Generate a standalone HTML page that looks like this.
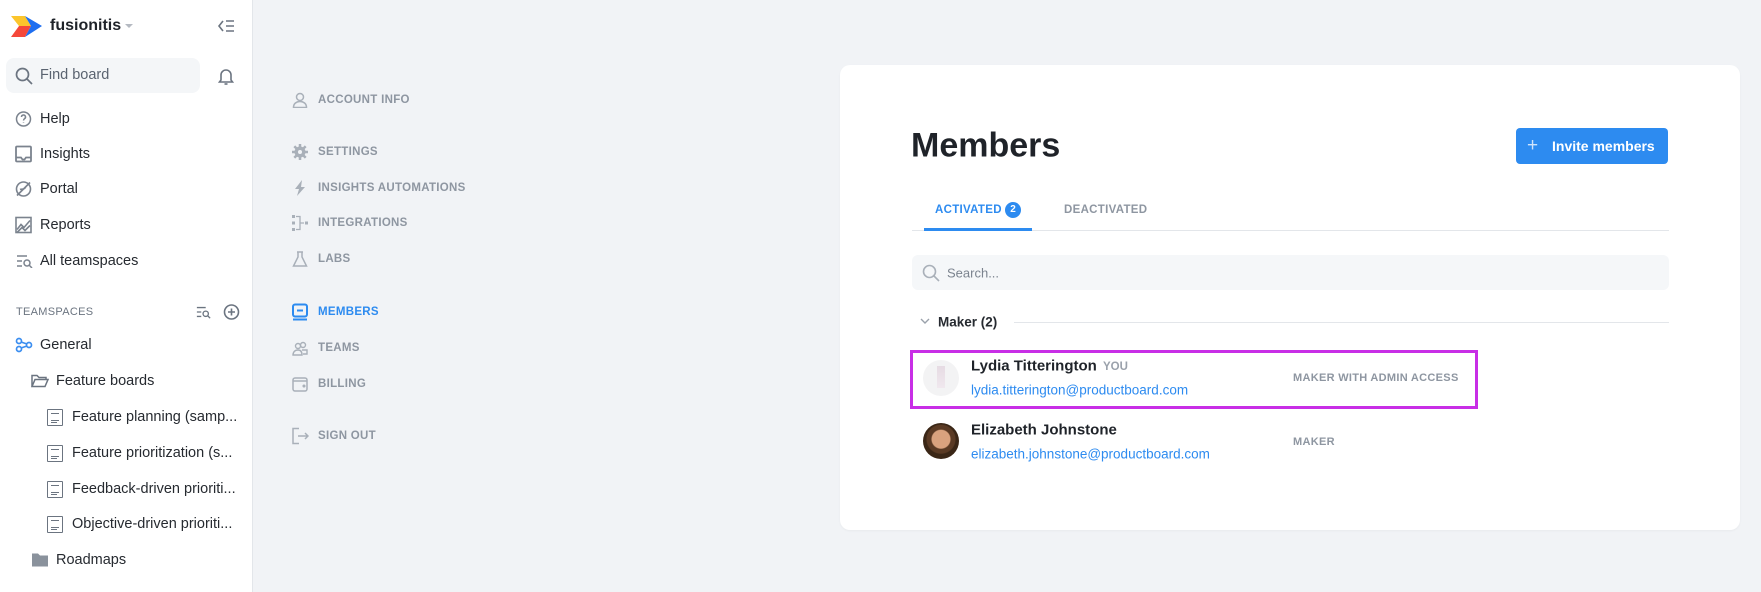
<!DOCTYPE html>
<html><head><meta charset="utf-8"><style>
*{margin:0;padding:0;box-sizing:border-box}
body{width:1761px;height:592px;overflow:hidden;background:#f1f3f6;font-family:"Liberation Sans",sans-serif;position:relative;color:#1f2329}
.a{position:absolute;white-space:nowrap}
#side{position:absolute;left:0;top:0;width:253px;height:592px;background:#fff;border-right:1px solid #e3e6ea}
.mi{font-size:14.5px;color:#262a30;transform:translateY(-50%)}
.ic{position:absolute;transform:translateY(-50%)}
.nav{font-size:11.5px;font-weight:bold;color:#8e96a1;letter-spacing:.3px;transform:translateY(-50%)}
#card{position:absolute;left:840px;top:65px;width:900px;height:465px;background:#fff;border-radius:10px;box-shadow:0 1px 2px rgba(0,0,0,.04)}
.cy{transform:translateY(-50%)}
.doc{position:absolute;width:16px;height:17px;border:1.6px solid #6b7480;border-radius:1px}
.doc::before{content:"";position:absolute;left:2.5px;top:3px;width:8px;height:6px;border-top:1.4px solid #6b7480;border-bottom:1.4px solid #6b7480}
.doc::after{content:"";position:absolute;left:2.5px;top:11.5px;width:6px;border-top:1.4px solid #6b7480}
</style></head><body>
<div id="side">
  <svg class="a" style="left:11px;top:16px" width="31" height="21" viewBox="0 0 31 21"><polygon points="0,0 14,0 20,10 8,10" fill="#fcc52b"/><polygon points="8,10 20,10 14,21 0,21" fill="#f5483a"/><polygon points="14,0 31,10 14,21 20,10" fill="#1e6ef0"/></svg>
  <div class="a cy" style="left:50px;top:26px;font-size:16px;font-weight:bold">fusionitis</div>
  <div class="a" style="left:125px;top:24px;width:0;height:0;border:4px solid transparent;border-top:4px solid #b5bac2"></div>
  <svg class="a" style="left:217px;top:18px" width="18" height="16" viewBox="0 0 18 16" fill="none" stroke="#6b7480" stroke-width="1.6"><path d="M6 3L2 8l4 5M9 3h8M9 8h8M9 13h8"/></svg>
  <div class="a" style="left:6px;top:58px;width:194px;height:35px;background:#f4f6f8;border-radius:8px"></div>
  <svg class="a" style="left:15px;top:67px" width="18" height="18" viewBox="0 0 18 18" fill="none" stroke="#6b7480" stroke-width="1.7"><circle cx="7.5" cy="7.5" r="6"/><path d="M12 12l5 5"/></svg>
  <div class="a mi" style="left:40px;top:75px;color:#5a6370">Find board</div>
  <svg class="a" style="left:218px;top:67px" width="16" height="18" viewBox="0 0 16 18" fill="none" stroke="#6b7480" stroke-width="1.6"><path d="M3 13V8a5 5 0 0110 0v5l1.5 2h-13z"/><path d="M6.5 17h3"/></svg>

  <svg class="ic a" style="left:15px;top:119px" width="17" height="17" viewBox="0 0 17 17" fill="none" stroke="#7b838e" stroke-width="1.5"><circle cx="8.5" cy="8.5" r="7"/><path d="M6.5 6.5a2 2 0 113 1.7c-.8.5-1 1-1 1.8M8.5 12v.5"/></svg>
  <div class="a mi" style="left:40px;top:119px">Help</div>
  <svg class="ic a" style="left:15px;top:154px" width="17" height="17" viewBox="0 0 17 17" fill="none" stroke="#7b838e" stroke-width="1.8"><rect x="1" y="1" width="15" height="15" rx="1"/><path d="M1 12h5l1.5 2h2l1.5-2h5"/></svg>
  <div class="a mi" style="left:40px;top:154px">Insights</div>
  <svg class="ic a" style="left:15px;top:189px" width="17" height="17" viewBox="0 0 17 17" fill="none" stroke="#7b838e" stroke-width="1.6"><circle cx="8.5" cy="8.5" r="7"/><path d="M2 15L15 2M5 9c2-1 4 1 6-3"/></svg>
  <div class="a mi" style="left:40px;top:189px">Portal</div>
  <svg class="ic a" style="left:15px;top:225px" width="17" height="17" viewBox="0 0 17 17" fill="none" stroke="#7b838e" stroke-width="1.6"><rect x="1" y="1" width="15" height="15"/><path d="M2 13l4-5 3 3 6-7M2 16l5-5 3 3 5-5"/></svg>
  <div class="a mi" style="left:40px;top:225px">Reports</div>
  <svg class="ic a" style="left:16px;top:261px" width="17" height="14" viewBox="0 0 17 14" fill="none" stroke="#7b838e" stroke-width="1.5"><path d="M1 2h10M1 7h5M1 12h5"/><circle cx="11" cy="9" r="3"/><path d="M13 11l3 3"/></svg>
  <div class="a mi" style="left:40px;top:261px">All teamspaces</div>

  <div class="a cy" style="left:16px;top:312px;font-size:11px;color:#6b7480;letter-spacing:.3px">TEAMSPACES</div>
  <svg class="ic a" style="left:196px;top:312px" width="15" height="13" viewBox="0 0 17 14" fill="none" stroke="#6b7480" stroke-width="1.5"><path d="M1 2h10M1 7h5M1 12h5"/><circle cx="11" cy="9" r="3"/><path d="M13 11l3 3"/></svg>
  <svg class="ic a" style="left:223px;top:312px" width="17" height="17" viewBox="0 0 17 17" fill="none" stroke="#6b7480" stroke-width="1.6"><circle cx="8.5" cy="8.5" r="7"/><path d="M8.5 5v7M5 8.5h7"/></svg>

  <svg class="ic a" style="left:15px;top:345px" width="18" height="16" viewBox="0 0 18 16" fill="none" stroke="#3b8ef0" stroke-width="1.7"><circle cx="4" cy="4" r="2.5"/><circle cx="4" cy="12" r="2.5"/><circle cx="14" cy="8" r="2.5"/><path d="M6 5l6 2M6 11l6-2"/></svg>
  <div class="a mi" style="left:40px;top:345px">General</div>
  <svg class="ic a" style="left:31px;top:381px" width="18" height="15" viewBox="0 0 18 15" fill="none" stroke="#6b7480" stroke-width="1.5"><path d="M1 13V2h5l2 2h7v2M1 13l3-7h13l-3 7z"/></svg>
  <div class="a mi" style="left:56px;top:381px">Feature boards</div>
  <div class="doc" style="left:47px;top:409px"></div>
  <div class="a mi" style="left:72px;top:417px">Feature planning (samp...</div>
  <div class="doc" style="left:47px;top:445px"></div>
  <div class="a mi" style="left:72px;top:453px">Feature prioritization (s...</div>
  <div class="doc" style="left:47px;top:481px"></div>
  <div class="a mi" style="left:72px;top:489px">Feedback-driven prioriti...</div>
  <div class="doc" style="left:47px;top:516px"></div>
  <div class="a mi" style="left:72px;top:524px">Objective-driven prioriti...</div>
  <svg class="ic a" style="left:31px;top:560px" width="18" height="15" viewBox="0 0 18 15"><path d="M1 1h6l2 2h8v11H1z" fill="#8a929c"/></svg>
  <div class="a mi" style="left:56px;top:560px">Roadmaps</div>
</div>

<svg class="ic a" style="left:292px;top:100px" width="16" height="16" viewBox="0 0 16 16" fill="none" stroke="#a9b0b9" stroke-width="1.5"><circle cx="8" cy="5" r="3.5"/><path d="M1.5 15.5c0-4 3-6 6.5-6s6.5 2 6.5 6z"/></svg>
<div class="a nav" style="left:318px;top:100px">ACCOUNT INFO</div>
<svg class="ic a" style="left:292px;top:152px" width="16" height="16" viewBox="0 0 16 16"><circle cx="8" cy="8" r="5.5" fill="#a9b0b9"/><path d="M8 0v16M0 8h16M2.3 2.3l11.4 11.4M13.7 2.3L2.3 13.7" stroke="#a9b0b9" stroke-width="2.5"/><circle cx="8" cy="8" r="2" fill="#f1f3f6"/></svg>
<div class="a nav" style="left:318px;top:152px">SETTINGS</div>
<svg class="ic a" style="left:294px;top:188px" width="12" height="16" viewBox="0 0 12 16"><path d="M8 0L1 9h4l-2 7 8-9H7z" fill="#a9b0b9"/></svg>
<div class="a nav" style="left:318px;top:188px">INSIGHTS AUTOMATIONS</div>
<svg class="ic a" style="left:292px;top:223px" width="16" height="16" viewBox="0 0 16 16" fill="#a9b0b9"><rect x="0" y="0" width="3" height="3"/><rect x="0" y="6.5" width="3" height="3"/><rect x="0" y="13" width="3" height="3"/><rect x="13" y="6.5" width="3" height="3"/><path d="M4 1.5h4v13H4M8 8h4" stroke="#a9b0b9" fill="none" stroke-width="1.3"/></svg>
<div class="a nav" style="left:318px;top:223px">INTEGRATIONS</div>
<svg class="ic a" style="left:292px;top:259px" width="16" height="16" viewBox="0 0 16 16" fill="none" stroke="#a9b0b9" stroke-width="1.5"><path d="M5 1h6M6 1v5L1.5 15h13L10 6V1"/></svg>
<div class="a nav" style="left:318px;top:259px">LABS</div>
<svg class="ic a" style="left:292px;top:312px" width="16" height="17" viewBox="0 0 16 17" fill="none" stroke="#2d8bf0" stroke-width="2"><rect x="1" y="1" width="14" height="12" rx="2"/><path d="M5 7h6M1 16h14"/></svg>
<div class="a nav" style="left:318px;top:312px;color:#2d8bf0">MEMBERS</div>
<svg class="ic a" style="left:292px;top:348px" width="16" height="16" viewBox="0 0 16 16" fill="none" stroke="#a9b0b9" stroke-width="1.4"><circle cx="6" cy="6" r="2.5"/><circle cx="11" cy="5" r="2.5"/><path d="M1 15c0-3 2-5 5-5s4 2 4 5zM10 10h5v4h-4"/></svg>
<div class="a nav" style="left:318px;top:348px">TEAMS</div>
<svg class="ic a" style="left:292px;top:384px" width="16" height="16" viewBox="0 0 16 16" fill="none" stroke="#a9b0b9" stroke-width="1.5"><rect x="1" y="2" width="14" height="13" rx="2"/><path d="M1 5h14"/><circle cx="12" cy="10" r=".8" fill="#a9b0b9"/></svg>
<div class="a nav" style="left:318px;top:384px">BILLING</div>
<svg class="ic a" style="left:292px;top:436px" width="17" height="17" viewBox="0 0 17 17" fill="none" stroke="#a9b0b9" stroke-width="1.5"><path d="M7 1H1v15h6M6 8.5h10M13 5.5l3 3-3 3"/></svg>
<div class="a nav" style="left:318px;top:436px">SIGN OUT</div>

<div id="card"></div>
<div class="a cy" style="left:911px;top:146px;font-size:34px;font-weight:bold;color:#1f2329">Members</div>
<div class="a" style="left:1516px;top:128px;width:152px;height:36px;background:#2d8bf0;border-radius:4px"></div>
<div class="a cy" style="left:1527px;top:146px;font-size:19px;color:#cfe3fb;font-weight:300">+</div>
<div class="a cy" style="left:1552px;top:146px;font-size:14px;font-weight:bold;color:#fff">Invite members</div>

<div class="a" style="left:912px;top:230px;width:757px;height:1px;background:#e3e6ea"></div>
<div class="a" style="left:924px;top:228px;width:108px;height:3px;background:#2d8bf0"></div>
<div class="a nav" style="left:935px;top:210px;color:#2d8bf0">ACTIVATED</div>
<div class="a" style="left:1005px;top:202px;width:16px;height:16px;border-radius:50%;background:#2d8bf0;color:#fff;font-size:10px;font-weight:bold;text-align:center;line-height:16px">2</div>
<div class="a nav" style="left:1064px;top:210px">DEACTIVATED</div>

<div class="a" style="left:912px;top:255px;width:757px;height:35px;background:#f5f7f9;border-radius:6px"></div>
<svg class="a" style="left:922px;top:264px" width="18" height="18" viewBox="0 0 18 18" fill="none" stroke="#a9b0b9" stroke-width="1.6"><circle cx="7.5" cy="7.5" r="6"/><path d="M12 12l5 5"/></svg>
<div class="a cy" style="left:947px;top:273px;font-size:13px;color:#7b838e">Search...</div>

<svg class="a" style="left:920px;top:318px" width="10" height="7" viewBox="0 0 10 7" fill="none" stroke="#9aa1ab" stroke-width="1.4"><path d="M1 1l4 4 4-4"/></svg>
<div class="a cy" style="left:938px;top:322px;font-size:13.5px;font-weight:bold;color:#262a30">Maker (2)</div>
<div class="a" style="left:1014px;top:322px;width:655px;height:1px;background:#e3e6ea"></div>

<div class="a" style="left:910px;top:350px;width:568px;height:59px;border:3.5px solid #c82ee6"></div>
<div class="a" style="left:923px;top:360px;width:36px;height:36px;border-radius:50%;background:#f3f3f4;overflow:hidden"><div style="position:absolute;left:14px;top:6px;width:8px;height:22px;background:linear-gradient(#e6dbe3,#f0e8ee)"></div></div>
<div class="a cy" style="left:971px;top:366px;font-size:15px;font-weight:bold;color:#1f2329">Lydia Titterington</div>
<div class="a cy" style="left:1103px;top:367px;font-size:11.5px;font-weight:bold;color:#9aa1ab">YOU</div>
<div class="a cy" style="left:971px;top:390px;font-size:13.5px;color:#2d8bf0">lydia.titterington@productboard.com</div>
<div class="a nav" style="left:1293px;top:378px;font-size:11px">MAKER WITH ADMIN ACCESS</div>

<div class="a" style="left:923px;top:423px;width:36px;height:36px;border-radius:50%;background:radial-gradient(circle at 50% 45%,#d9a27e 0 9px,#5a3a24 10px 14px,#3a2616 15px)"></div>
<div class="a cy" style="left:971px;top:430px;font-size:15px;font-weight:bold;color:#1f2329">Elizabeth Johnstone</div>
<div class="a cy" style="left:971px;top:454px;font-size:13.5px;color:#2d8bf0">elizabeth.johnstone@productboard.com</div>
<div class="a nav" style="left:1293px;top:442px;font-size:11px">MAKER</div>
</body></html>
